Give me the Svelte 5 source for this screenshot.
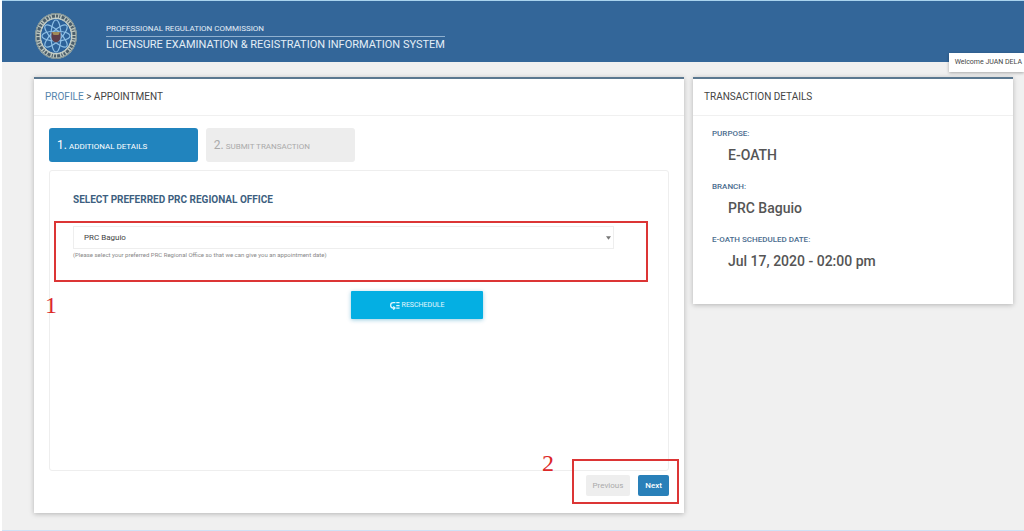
<script lang="ts">
	let office = $state('PRC Baguio');

	const offices = ['PRC Baguio'];

	const details = [
		{ label: 'PURPOSE:', value: 'E-OATH' },
		{ label: 'BRANCH:', value: 'PRC Baguio' },
		{ label: 'E-OATH SCHEDULED DATE:', value: 'Jul 17, 2020 - 02:00 pm' }
	];
</script>

<div class="page">
	<header class="topbar">
		<svg class="seal" viewBox="0 0 44 48" role="img" aria-label="PRC seal">
			<ellipse cx="22" cy="24" rx="21" ry="23" fill="#b9c3bd" />
			<ellipse cx="22" cy="24" rx="20.500" ry="22.500" fill="none" stroke="#7d8f90" stroke-width="1" />
			<ellipse cx="22" cy="24" rx="18" ry="20" fill="none" stroke="#4a5d6a" stroke-width="3" stroke-dasharray="2 1.3 1 1.4 3 1.2" />
			<ellipse cx="22" cy="24" rx="15.5" ry="17.5" fill="#2d6299" stroke="#cfd6cb" stroke-width="1" />
			<g fill="none" stroke="#8fc0e6" stroke-width="1.2">
				<ellipse cx="22" cy="24" rx="5" ry="16" />
				<ellipse cx="22" cy="24" rx="5" ry="15" transform="rotate(45 22 24)" />
				<ellipse cx="22" cy="24" rx="5" ry="14" transform="rotate(90 22 24)" />
				<ellipse cx="22" cy="24" rx="5" ry="15" transform="rotate(135 22 24)" />
			</g>
			<path d="M17.5 20h9v5.5q0 3.5-4.5 5-4.500-1.500-4.500-5z" fill="#5e3d48" />
			<path d="M18 20h8l-1.500 3h-5z" fill="#a08a58" />
		</svg>
		<div class="brand">
			<span class="agency">PROFESSIONAL REGULATION COMMISSION</span>
			<span class="system">LICENSURE EXAMINATION &amp; REGISTRATION INFORMATION SYSTEM</span>
		</div>
		<div class="welcome">Welcome JUAN DELA</div>
	</header>

	<div class="columns">
		<main class="card">
			<h1 class="card-title"><a href="#profile">PROFILE</a> &gt; APPOINTMENT</h1>
			<div class="card-body">
				<div class="steps">
					<button type="button" class="step active"><span class="number">1.</span> ADDITIONAL DETAILS</button>
					<button type="button" class="step" disabled><span class="number">2.</span> SUBMIT TRANSACTION</button>
				</div>

				<section class="panel">
					<h2>SELECT PREFERRED PRC REGIONAL OFFICE</h2>
					<div class="field">
						<select bind:value={office} aria-label="Preferred PRC Regional Office" aria-describedby="office-hint">
							{#each offices as name}
								<option>{name}</option>
							{/each}
						</select>
						<svg class="caret" viewBox="0 0 6 4" aria-hidden="true"><path d="M0 0h6l-3 4z" fill="#777" /></svg>
					</div>
					<p class="hint" id="office-hint">(Please select your preferred PRC Regional Office so that we can give you an appointment date)</p>
					<button type="button" class="reschedule">
						<svg viewBox="0 0 24 20" aria-hidden="true">
							<path d="M13 3H8a6 6 0 0 0 0 13h3M8 12l4 4-4 4M15 3h8M15 10h8M15 16h8" fill="none" stroke="currentColor" stroke-width="3" />
						</svg>
						RESCHEDULE
					</button>
					<div class="callout callout-office"><span>1</span></div>
				</section>

				<div class="actions">
					<button type="button" class="previous" disabled>Previous</button>
					<button type="button" class="next">Next</button>
					<div class="callout callout-actions"><span>2</span></div>
				</div>
			</div>
		</main>

		<aside class="card">
			<h2 class="card-title">TRANSACTION DETAILS</h2>
			<dl>
				{#each details as item}
					<dt>{item.label}</dt>
					<dd>{item.value}</dd>
				{/each}
			</dl>
		</aside>
	</div>
</div>

<style>
	:global(body) {
		background: #fff;
	}

	.page {
		box-sizing: border-box;
		min-height: 100vh;
		margin-left: 2px;
		overflow: hidden;
		border-top: 1px solid #a9d3ee;
		border-bottom: 1px solid #cfe2f5;
		background: #f0f0f0;
		color: #444;
		font-family: Roboto, "Liberation Sans", sans-serif;
	}

	.page * {
		box-sizing: border-box;
	}

	button,
	select {
		font-family: inherit;
	}

	.topbar {
		position: relative;
		display: flex;
		align-items: center;
		gap: 28px;
		height: 61px;
		padding: 8px 32px 0;
		background: #336699;
	}

	.seal {
		width: 44px;
		height: 48px;
	}

	.brand {
		display: flex;
		flex-direction: column;
		padding-top: 4px;
		color: #e4eef7;
		white-space: nowrap;
	}

	.agency {
		padding-bottom: 1px;
		border-bottom: 1px solid #8fb0cf;
		font-size: 8px;
		line-height: 12px;
	}

	.system {
		font-size: 11px;
		line-height: 16px;
	}

	.welcome {
		position: absolute;
		top: 52px;
		right: 0;
		padding: 0 2px 0 6px;
		background: #fff;
		box-shadow: 0 1px 3px rgba(0, 0, 0, 0.3);
		font-size: 7px;
		line-height: 19px;
		white-space: nowrap;
	}

	.columns {
		display: grid;
		grid-template-columns: 65fr 32fr;
		align-items: start;
		gap: 9px;
		padding: 15px 11px 17px 32px;
	}

	.card {
		border-top: 2px solid #5b7890;
		background: #fff;
		box-shadow: 0 1px 5px rgba(0, 0, 0, 0.25);
	}

	.card-title {
		margin: 0;
		padding: 0 11px;
		border-bottom: 1px solid #f0f0f0;
		color: #444;
		font-size: 10px;
		font-weight: 400;
		line-height: 36px;
	}

	.card-title a {
		color: #5585ac;
		text-decoration: none;
	}

	.card-body {
		padding: 12px 15px 17px;
	}

	.steps {
		display: flex;
		gap: 8px;
	}

	.step {
		width: 24%;
		height: 34px;
		padding: 0 8px;
		border: 0;
		border-radius: 3px;
		background: #ededed;
		color: #aaa;
		font-size: 8px;
		text-align: left;
	}

	.step.active {
		background: #2184be;
		color: #fff;
	}

	.number {
		font-size: 12px;
	}

	.panel {
		position: relative;
		min-height: 301px;
		margin-top: 8px;
		padding: 21px 54px 0 23px;
		border: 1px solid #eee;
		border-radius: 3px;
	}

	.panel h2 {
		margin: 0 0 18px;
		color: #3d5f80;
		font-size: 10px;
		font-weight: 700;
		line-height: 16px;
	}

	.field {
		position: relative;
	}

	select {
		display: block;
		width: 100%;
		height: 23px;
		padding: 0 10px;
		border: 1px solid #eee;
		appearance: none;
		background: #fff;
		color: #444;
		font-size: 8px;
	}

	.caret {
		position: absolute;
		top: 10px;
		right: 3px;
		width: 5px;
		height: 4px;
	}

	.hint {
		margin: 0;
		color: #888;
		font-size: 6px;
		line-height: 12px;
	}

	.reschedule {
		display: flex;
		align-items: center;
		justify-content: center;
		gap: 2px;
		width: 132px;
		height: 28px;
		margin: 30px auto 0 278px;
		border: 0;
		border-radius: 1px;
		background: #04afe3;
		box-shadow: 0 1px 4px rgba(4, 130, 180, 0.4);
		color: #e4f7fd;
		font-size: 7px;
	}

	.reschedule svg {
		width: 10px;
		height: 9px;
	}

	.actions {
		position: relative;
		display: flex;
		justify-content: flex-end;
		gap: 8px;
		margin-top: 4px;
	}

	.actions button {
		height: 21px;
		padding: 0 7px;
		border: 0;
		border-radius: 2px;
		font-size: 8px;
	}

	.previous {
		background: #eee;
		color: #aaa;
	}

	.actions .next {
		background: #2980b9;
		color: #fff;
		font-weight: 500;
	}

	/* numbered markers laid over the form */
	.callout {
		position: absolute;
		border: 2px solid #dc3535;
		pointer-events: none;
	}

	.callout span {
		position: absolute;
		color: #dc2828;
		font-family: "Liberation Serif", serif;
		font-size: 24px;
		line-height: 24px;
	}

	.callout-office {
		top: 50px;
		right: 20px;
		left: 4px;
		height: 61px;
	}

	.callout-office span {
		top: 70px;
		left: -11px;
	}

	.callout-actions {
		top: -16px;
		right: -10px;
		width: 107px;
		height: 45px;
	}

	.callout-actions span {
		top: -10px;
		left: -32px;
	}

	dl {
		margin: 0;
		padding: 10px 19px 19px;
	}

	dt {
		color: #4a6c8e;
		font-size: 8px;
		font-weight: 500;
		line-height: 16px;
	}

	dd {
		margin: 0 0 11px 16px;
		color: #555;
		font-size: 14px;
		font-weight: 500;
		line-height: 26px;
	}
</style>
